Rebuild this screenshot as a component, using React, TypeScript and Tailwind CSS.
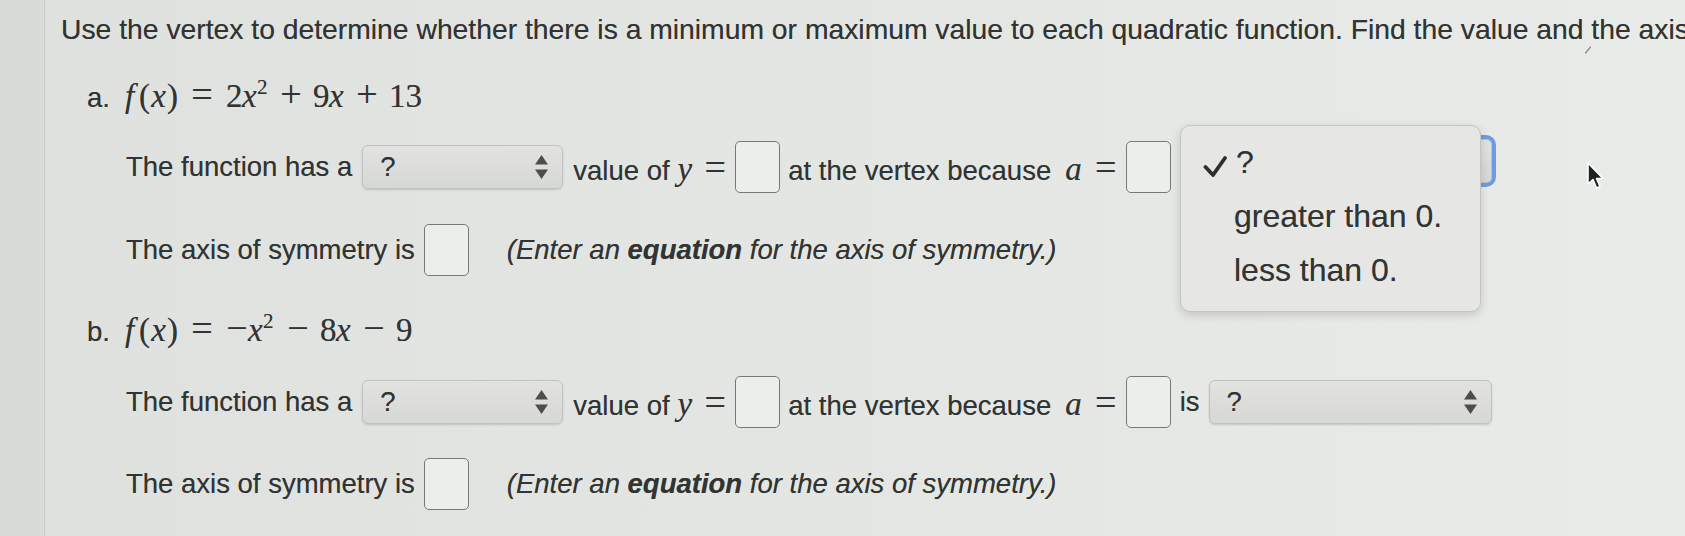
import React from "react";

const serif = "font-['Liberation_Serif','Times_New_Roman',serif]";

function M({ c, cls = "" }: { c: string; cls?: string }) {
  return <span className={`${serif} text-[33px] leading-none inline-block ${cls}`}>{c}</span>;
}

function Sup({ c, cls = "" }: { c: string; cls?: string }) {
  return (
    <span className={`${serif} text-[21px] leading-none inline-block relative -top-[13px] ${cls}`}>{c}</span>
  );
}

function Arrows() {
  return (
    <svg width="15" height="26" viewBox="0 0 15 26" className="shrink-0">
      <path d="M7.5 1 L14 10.5 L1 10.5 Z M1 15.5 L14 15.5 L7.5 25 Z" fill="#4b4e4c" />
    </svg>
  );
}

function Select({ cls }: { cls: string }) {
  return (
    <div
      className={`flex items-center justify-between h-[44px] rounded-[6px] border border-[#c0c2bf] bg-gradient-to-b from-[#e2e3e1] to-[#d6d8d5] shadow-[0_1px_2px_rgba(0,0,0,0.15)] pl-[17px] pr-[13px] ${cls}`}
    >
      <span className="text-[27.5px] leading-none">?</span>
      <Arrows />
    </div>
  );
}

function Box({ cls = "" }: { cls?: string }) {
  return (
    <div
      className={`w-[45px] h-[52px] shrink-0 rounded-[5px] border-[1.5px] border-[#767875] bg-[#eceeeb] ${cls}`}
    />
  );
}

const T = "text-[27.5px] leading-none whitespace-nowrap";

function FnRow() {
  return (
    <>
      <span className={T}>The function has a</span>
      <Select cls="w-[201px] ml-[10px]" />
      <span className="flex items-baseline ml-[10px]">
        <span className={T}>value of</span>
        <M c="y" cls="italic ml-[8px]" />
        <M c="=" cls="ml-[10px] w-[26px] text-center text-[38px]" />
      </span>
      <Box cls="ml-[7px]" />
      <span className="flex items-baseline ml-[8px]">
        <span className={T}>at the vertex because</span>
        <M c="a" cls="italic ml-[14px]" />
        <M c="=" cls="ml-[11px] w-[26px] text-center text-[38px]" />
      </span>
      <Box cls="ml-[7px]" />
    </>
  );
}

function AxisRow() {
  return (
    <>
      <span className={T}>The axis of symmetry is</span>
      <Box cls="ml-[9px]" />
      <span className={`${T} italic ml-[38px]`}>
        (Enter an <b className="font-bold">equation</b> for the axis of symmetry.)
      </span>
    </>
  );
}

function FX() {
  return (
    <>
      <M c="f" cls="italic w-[14px]" />
      <M c="(" cls="w-[11px]" />
      <M c="x" cls="italic w-[17px] text-center" />
      <M c=")" cls="w-[11px]" />
      <M c="=" cls="ml-[11px] w-[26px] text-center text-[38px]" />
    </>
  );
}

export default function App() {
  return (
    <div className="relative w-[1685px] h-[536px] overflow-hidden flex bg-gradient-to-r from-[#dfe1de] via-[#e4e6e3] to-[#e9ebe8] text-[#313432] [text-shadow:0_0_0.6px_rgba(40,42,41,0.55)] font-['Liberation_Sans',Arial,sans-serif]">
      <div className="w-[45px] shrink-0 bg-[#d9dbd8] border-r border-[#cbcdca]" />
      <div className="flex flex-col pl-[16px] pt-[12px] min-w-0">
        <p className="h-[34px] leading-[34px] text-[28.3px] whitespace-nowrap">
          Use the vertex to determine whether there is a minimum or maximum value to each quadratic function. Find the value and the axis of symmetry.
        </p>

        <div className="mt-[28px] ml-[26px] h-[40px] flex items-center">
          <div className="flex items-baseline">
            <span className={`${T} w-[38px]`}>a.</span>
            <FX />
            <M c="2" cls="ml-[11px] w-[16px]" />
            <M c="x" cls="italic w-[15px]" />
            <Sup c="2" cls="w-[11px]" />
            <M c="+" cls="ml-[10px] w-[26px] text-center text-[38px]" />
            <M c="9" cls="ml-[9px] w-[16px]" />
            <M c="x" cls="italic w-[15px]" />
            <M c="+" cls="ml-[10px] w-[26px] text-center text-[38px]" />
            <M c="13" cls="ml-[9px]" />
          </div>
        </div>

        <div className="mt-[27px] ml-[65px] h-[52px] flex items-center">
          <FnRow />
          <Select cls="w-[283px] ml-[38px] mb-[12px] bg-gradient-to-b from-[#cfd1ce] to-[#c3c5c2] ring-4 ring-[#6c9be4]" />
        </div>

        <div className="mt-[31px] ml-[65px] h-[52px] flex items-center">
          <AxisRow />
        </div>

        <div className="mt-[32px] ml-[26px] h-[40px] flex items-center">
          <div className="flex items-baseline">
            <span className={`${T} w-[38px]`}>b.</span>
            <FX />
            <M c="−" cls="ml-[11px] w-[22px] text-center text-[38px]" />
            <M c="x" cls="italic w-[15px]" />
            <Sup c="2" cls="w-[11px]" />
            <M c="−" cls="ml-[11px] w-[26px] text-center text-[38px]" />
            <M c="8" cls="ml-[9px] w-[16px]" />
            <M c="x" cls="italic w-[15px]" />
            <M c="−" cls="ml-[10px] w-[26px] text-center text-[38px]" />
            <M c="9" cls="ml-[9px]" />
          </div>
        </div>

        <div className="mt-[28px] ml-[65px] h-[52px] flex items-center">
          <FnRow />
          <span className={`${T} ml-[9px]`}>is</span>
          <Select cls="w-[283px] ml-[9px]" />
        </div>

        <div className="mt-[30px] ml-[65px] h-[52px] flex items-center">
          <AxisRow />
        </div>
      </div>

      {/* open dropdown menu */}
      <div className="absolute left-[1180px] top-[125px] w-[301px] h-[187px] rounded-[10px] border border-[#c3c5c2] bg-[#e6e7e5] shadow-[0_3px_10px_rgba(0,0,0,0.15)] pt-[9px] flex flex-col text-[32px] leading-none text-[#323533]">
        <div className="h-[54px] flex items-center pl-[22px]">
          <svg width="24" height="24" viewBox="0 0 24 24" className="mt-[8px] shrink-0">
            <path d="M2.5 13 L10 21 L22 4" fill="none" stroke="#2d302e" strokeWidth="3.8" strokeLinecap="round" strokeLinejoin="round" />
          </svg>
          <span className="ml-[9px]">?</span>
        </div>
        <div className="h-[54px] flex items-center pl-[53px] whitespace-nowrap">greater than 0.</div>
        <div className="h-[54px] flex items-center pl-[53px] whitespace-nowrap">less than 0.</div>
      </div>

      {/* mouse cursor */}
      <svg width="19" height="30" viewBox="0 0 19 30" className="absolute left-[1586px] top-[161px]">
        <path d="M2 2 L2 23 L7 18.5 L10.5 27 L14 25.5 L10.5 17.5 L17 17.5 Z" fill="#1f2120" stroke="#ffffff" strokeWidth="1.6" strokeLinejoin="round" />
      </svg>

      {/* small speck */}
      <svg width="8" height="8" viewBox="0 0 8 8" className="absolute left-[1584px] top-[46px]">
        <path d="M1.5 7 L6.5 1" stroke="#8a8c89" strokeWidth="1.2" strokeLinecap="round" />
      </svg>
    </div>
  );
}
